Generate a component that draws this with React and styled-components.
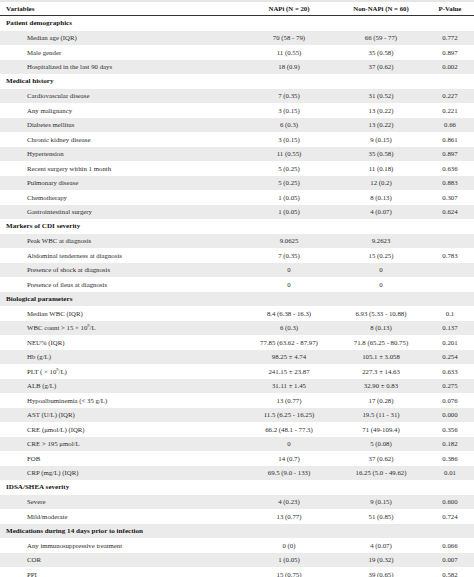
import React from "react";
import styled, { createGlobalStyle } from "styled-components";

const Global = createGlobalStyle`
  html, body { margin: 0; padding: 0; background: #fff; }
  body { font-family: "Liberation Serif", "Times New Roman", serif; color: #2c2c2c; }
`;

const Table = styled.div`
  width: 474px;
  display: flex;
  flex-direction: column;
  font-size: 6.8px;
`;

const TopStrip = styled.div`
  height: 2px;
  background: #e6e6e6;
`;

const Row = styled.div`
  display: grid;
  grid-template-columns: 242px 94px 90px 48px;
  align-items: center;
  height: ${(p) => (p.$head ? "13px" : "14.5px")};
  background: ${(p) => (p.$shade ? "#ebebeb" : "#fff")};
  border-bottom: ${(p) => (p.$head ? "1px solid #333" : "none")};
`;

const Label = styled.div`
  padding-left: ${(p) => (p.$indent ? "27px" : "6px")};
  font-weight: ${(p) => (p.$bold ? 700 : 400)};
  color: ${(p) => (p.$bold ? "#151515" : "#2c2c2c")};
  font-size: ${(p) => (p.$bold ? "7.1px" : "6.8px")};
  white-space: nowrap;
`;

const Cell = styled.div`
  text-align: center;
  white-space: nowrap;
  font-weight: ${(p) => (p.$bold ? 700 : 400)};
  color: ${(p) => (p.$bold ? "#151515" : "#2c2c2c")};
`;

const Sup = styled.sup`
  font-size: 4.5px;
  line-height: 0;
`;

const rows = [
  { s: "Patient demographics" },
  ["Median age (IQR)", "70 (58 - 79)", "66 (59 - 77)", "0.772"],
  ["Male gender", "11 (0.55)", "35 (0.58)", "0.897"],
  ["Hospitalized in the last 90 days", "18 (0.9)", "37 (0.62)", "0.002"],
  { s: "Medical history" },
  ["Cardiovascular disease", "7 (0.35)", "31 (0.52)", "0.227"],
  ["Any malignancy", "3 (0.15)", "13 (0.22)", "0.221"],
  ["Diabetes mellitus", "6 (0.3)", "13 (0.22)", "0.66"],
  ["Chronic kidney disease", "3 (0.15)", "9 (0.15)", "0.861"],
  ["Hypertension", "11 (0.55)", "35 (0.58)", "0.897"],
  ["Recent surgery within 1 month", "5 (0.25)", "11 (0.18)", "0.636"],
  ["Pulmonary disease", "5 (0.25)", "12 (0.2)", "0.883"],
  ["Chemotherapy", "1 (0.05)", "8 (0.13)", "0.307"],
  ["Gastrointestinal surgery", "1 (0.05)", "4 (0.07)", "0.624"],
  { s: "Markers of CDI severity" },
  ["Peak WBC at diagnosis", "9.0625", "9.2623", ""],
  ["Abdominal tenderness at diagnosis", "7 (0.35)", "15 (0.25)", "0.783"],
  ["Presence of shock at diagnosis", "0", "0", ""],
  ["Presence of ileus at diagnosis", "0", "0", ""],
  { s: "Biological parameters" },
  ["Median WBC (IQR)", "8.4 (6.38 - 16.3)", "6.93 (5.33 - 10.88)", "0.1"],
  [
    <>WBC count &gt; 15 × 10<Sup>9</Sup>/L</>,
    "6 (0.3)",
    "8 (0.13)",
    "0.137",
  ],
  ["NEU% (IQR)", "77.85 (63.62 - 87.97)", "71.8 (65.25 - 80.75)", "0.201"],
  ["Hb (g/L)", "98.25 ± 4.74", "105.1 ± 3.058", "0.254"],
  [
    <>PLT ( × 10<Sup>9</Sup>/L)</>,
    "241.15 ± 23.87",
    "227.3 ± 14.63",
    "0.633",
  ],
  ["ALB (g/L)", "31.11 ± 1.45", "32.90 ± 0.83", "0.275"],
  ["Hypoalbuminemia (< 35 g/L)", "13 (0.77)", "17 (0.28)", "0.076"],
  ["AST (U/L) (IQR)", "11.5 (6.25 - 16.25)", "19.5 (11 - 31)", "0.000"],
  ["CRE (μmol/L) (IQR)", "66.2 (48.1 - 77.3)", "71 (49-109.4)", "0.356"],
  ["CRE > 195 μmol/L", "0", "5 (0.08)", "0.182"],
  ["FOB", "14 (0.7)", "37 (0.62)", "0.386"],
  ["CRP (mg/L) (IQR)", "69.5 (9.0 - 133)", "16.25 (5.0 - 49.62)", "0.01"],
  { s: "IDSA/SHEA severity" },
  ["Severe", "4 (0.23)", "9 (0.15)", "0.600"],
  ["Mild/moderate", "13 (0.77)", "51 (0.85)", "0.724"],
  { s: "Medications during 14 days prior to infection" },
  ["Any immunosuppressive treatment", "0 (0)", "4 (0.07)", "0.066"],
  ["COR", "1 (0.05)", "19 (0.32)", "0.007"],
  ["PPI", "15 (0.75)", "39 (0.65)", "0.582"],
];

export default function App() {
  return (
    <>
      <Global />
      <Table>
        <TopStrip />
        <Row $head>
          <Label $bold>Variables</Label>
          <Cell $bold>NAPi (N = 20)</Cell>
          <Cell $bold>Non-NAPi (N = 60)</Cell>
          <Cell $bold>P-Value</Cell>
        </Row>
        {rows.map((r, i) =>
          r.s ? (
            <Row key={i} $shade={i % 2 === 1}>
              <Label $bold>{r.s}</Label>
              <Cell />
              <Cell />
              <Cell />
            </Row>
          ) : (
            <Row key={i} $shade={i % 2 === 1}>
              <Label $indent>{r[0]}</Label>
              <Cell>{r[1]}</Cell>
              <Cell>{r[2]}</Cell>
              <Cell>{r[3]}</Cell>
            </Row>
          )
        )}
      </Table>
    </>
  );
}
